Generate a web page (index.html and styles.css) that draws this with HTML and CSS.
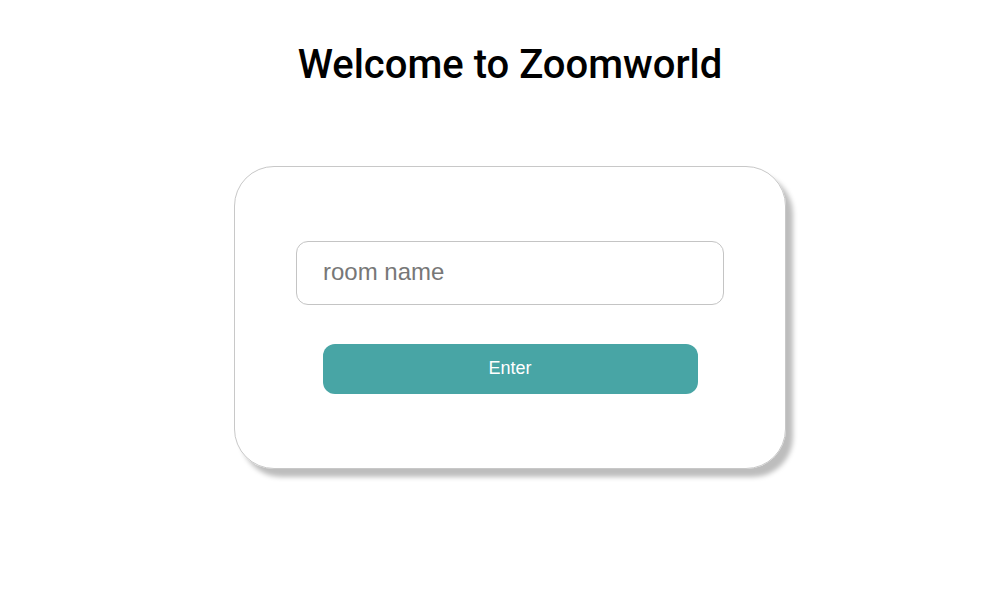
FILE: index.html
```html
<!DOCTYPE html>
<html lang="en">
<head>
    <meta charset="UTF-8">
    <meta name="viewport" content="width=device-width, initial-scale=1.0">
    <title>Zoomworld</title>
    <link rel="stylesheet" href="styles.css">
</head>
<body>
    <main class="welcome">
        <h1 class="title">Welcome to Zoomworld</h1>

        <!-- 방 입장 폼 -->
        <form class="room-card">
            <input class="room-input" type="text" placeholder="room name">
            <button class="enter-btn" type="button">Enter</button>
        </form>
    </main>
</body>
</html>
```

FILE: styles.css
```css
body {
    margin: 0;
    background-color: #fff;
    font-family: "Liberation Sans", Arial, sans-serif;
}

.welcome {
    min-height: 100vh;
    box-sizing: border-box;
    padding: 41px 0 0 18px;
    display: flex;
    flex-direction: column;
    align-items: center;
}

.title {
    margin: 0;
    font-family: Roboto, sans-serif;
    font-size: 40px;
    font-weight: 500;
    line-height: 47px;
    color: #000;
}

.room-card {
    margin-top: 78px;
    width: 552px;
    box-sizing: border-box;
    padding: 74px 61px;
    border: 1px solid #c8c8c8;
    border-radius: 40px;
    box-shadow: 7px 8px 5px #bdbdbd;
    display: flex;
    flex-direction: column;
    align-items: center;
}

.room-input {
    width: 100%;
    height: 64px;
    box-sizing: border-box;
    padding: 0 26px 3px;
    border: 1px solid #c4c4c4;
    border-radius: 12px;
    font-family: "Liberation Sans", Arial, sans-serif;
    font-size: 24px;
    color: #333;
    outline: none;
}

.room-input::placeholder {
    color: #777;
}

.enter-btn {
    margin-top: 39px;
    width: 375px;
    height: 50px;
    padding: 0 0 2px;
    border: none;
    border-radius: 12px;
    background-color: #48a5a5;
    color: #fff;
    font-family: "Liberation Sans", Arial, sans-serif;
    font-size: 18px;
    cursor: pointer;
}
```
